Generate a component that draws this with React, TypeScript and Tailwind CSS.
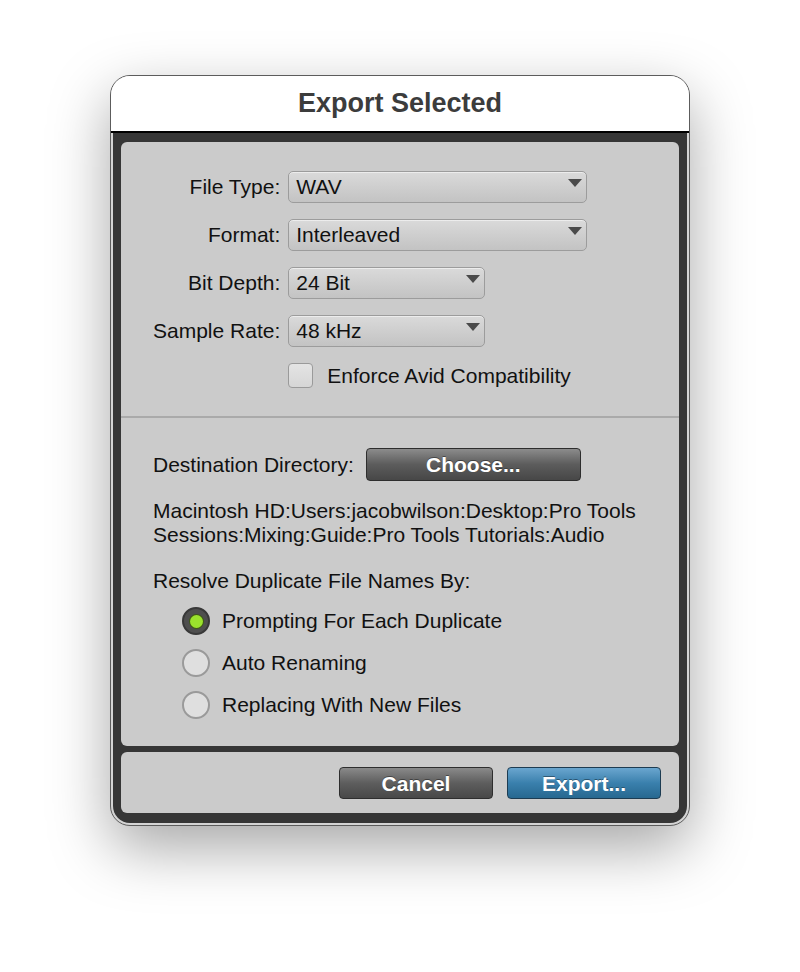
import React from 'react';

const font = "font-['Liberation_Sans',Arial,Helvetica,sans-serif]";

const Dropdown: React.FC<{ value: string; width: string }> = ({ value, width }) => (
  <div className={`relative h-[32px] ${width} rounded-[5px] border border-[#9c9c9c] bg-gradient-to-b from-[#dadada] to-[#c3c3c3] shadow-[inset_0_1px_0_rgba(255,255,255,0.5)] flex items-center pl-[7px] text-[21px] leading-[24px] text-[#111]`}>
    {value}
    <span className="absolute right-[4px] top-[7px] w-0 h-0 border-l-[7px] border-r-[7px] border-t-[8px] border-l-transparent border-r-transparent border-t-[#4a4a4a]" />
  </div>
);

const Radio: React.FC<{ label: string; checked?: boolean }> = ({ label, checked }) => (
  <div className="flex items-center gap-[12px] h-[28px]">
    {checked ? (
      <span className="w-[28px] h-[28px] rounded-full bg-[#4e4e4e] border-2 border-[#383838] flex items-center justify-center">
        <span className="w-[13px] h-[13px] rounded-full bg-[#9be22d] shadow-[0_0_0_1px_#3f5a16]" />
      </span>
    ) : (
      <span className="w-[28px] h-[28px] rounded-full bg-[#dfdfdf] border-2 border-[#9a9a9a]" />
    )}
    <span>{label}</span>
  </div>
);

const fields = [
  { label: 'File Type:', value: 'WAV', width: 'w-[299px]' },
  { label: 'Format:', value: 'Interleaved', width: 'w-[299px]' },
  { label: 'Bit Depth:', value: '24 Bit', width: 'w-[197px]' },
  { label: 'Sample Rate:', value: '48 kHz', width: 'w-[197px]' },
];

const App: React.FC = () => {
  return (
    <div className={`min-h-screen w-full bg-white pt-[75px] ${font}`}>
      <div className="mx-auto w-[580px] rounded-[20px] border border-[#5c5c5c] bg-[#d4d4d4] overflow-hidden shadow-[0_22px_60px_rgba(0,0,0,0.35)]">
        <div className="h-[57px] bg-white border-b-2 border-black flex items-center justify-center">
          <h1 className="text-[27px] font-bold text-[#3c3c3c] leading-none">Export Selected</h1>
        </div>
        <div className="px-[2px] pb-[2px]">
          <div className="bg-[#363636] rounded-b-[17px] px-[8px] pt-[9px] pb-[10px] flex flex-col gap-[6px]">
            <div className="h-[604px] rounded-[6px] bg-[#cbcbcb] text-[21px] leading-[24px] text-[#111]">
              <div className="pl-[32px] pt-[29px] pb-[28px]">
                <div className="grid grid-cols-[auto_auto] justify-start gap-x-[8px] gap-y-[16px] items-center">
                  {fields.map(f => (
                    <React.Fragment key={f.label}>
                      <span className="text-right whitespace-nowrap">{f.label}</span>
                      <Dropdown value={f.value} width={f.width} />
                    </React.Fragment>
                  ))}
                  <span />
                  <div className="flex items-center gap-[14px]">
                    <span className="w-[25px] h-[25px] rounded-[4px] border border-[#9a9a9a] bg-gradient-to-b from-[#e4e4e4] to-[#d6d6d6]" />
                    <span>Enforce Avid Compatibility</span>
                  </div>
                </div>
              </div>
              <div className="border-t-2 border-[#aaaaaa]" />
              <div className="pl-[32px] pt-[30px]">
                <div className="flex items-center gap-[12px]">
                  <span>Destination Directory:</span>
                  <button className="h-[33px] w-[215px] rounded-[4px] border border-[#2e2e2e] bg-gradient-to-b from-[#8c8c8c] via-[#5c5c5c] to-[#474747] text-white font-bold text-[21px] [text-shadow:0_-1px_0_rgba(0,0,0,0.4)]">
                    Choose...
                  </button>
                </div>
                <p className="mt-[18px]">
                  Macintosh HD:Users:jacobwilson:Desktop:Pro Tools
                  <br />
                  Sessions:Mixing:Guide:Pro Tools Tutorials:Audio
                </p>
                <p className="mt-[22px]">Resolve Duplicate File Names By:</p>
                <div className="mt-[14px] pl-[29px] flex flex-col gap-[14px]">
                  <Radio label="Prompting For Each Duplicate" checked />
                  <Radio label="Auto Renaming" />
                  <Radio label="Replacing With New Files" />
                </div>
              </div>
            </div>
            <div className="h-[61px] rounded-[6px] bg-[#cbcbcb] flex items-center justify-end gap-[14px] pr-[18px]">
              <button className="h-[32px] w-[154px] rounded-[4px] border border-[#2e2e2e] bg-gradient-to-b from-[#8a8a8a] via-[#5e5e5e] to-[#484848] text-white font-bold text-[21px] [text-shadow:0_-1px_0_rgba(0,0,0,0.4)]">
                Cancel
              </button>
              <button className="h-[32px] w-[154px] rounded-[4px] border border-[#1d3c52] bg-gradient-to-b from-[#6aa6cf] via-[#3a80ad] to-[#276890] text-white font-bold text-[21px] [text-shadow:0_-1px_0_rgba(0,0,0,0.4)]">
                Export...
              </button>
            </div>
          </div>
        </div>
      </div>
    </div>
  );
};

export default App;
